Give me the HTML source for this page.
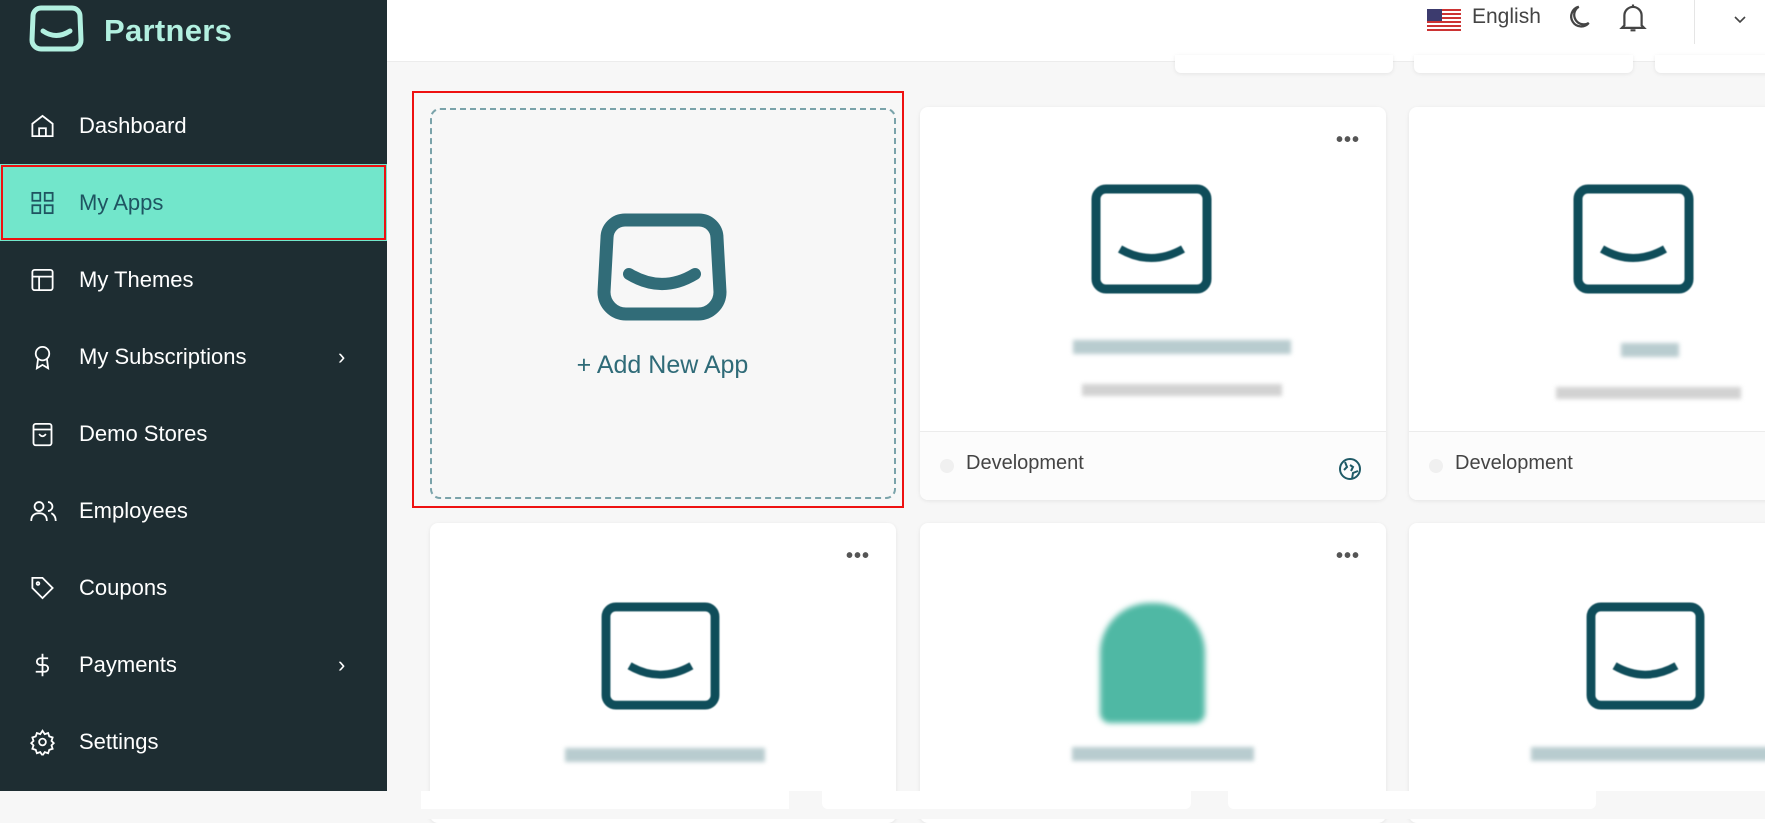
<!DOCTYPE html>
<html><head><meta charset="utf-8"><style>
*{margin:0;padding:0;box-sizing:border-box}
body{width:1765px;height:819px;overflow:hidden;background:#f7f7f7;font-family:"Liberation Sans",sans-serif;position:relative}
.sb{position:absolute;left:0;top:0;width:387px;height:791px;background:#1e2d32;z-index:2}
.logo{position:absolute;left:29px;top:5px}
.brand{position:absolute;left:104px;top:13px;font-size:31px;font-weight:bold;color:#b2f0e0;letter-spacing:.3px}
.item{position:absolute;left:0;width:387px;height:77px;color:#fff;font-size:22px}
.item span{position:absolute;left:79px;top:50%;transform:translateY(-50%)}
.item svg{position:absolute;left:29px;top:50%;transform:translateY(-50%)}
.item .chev{position:absolute;left:338px;font-size:22px}
.active{background:#72e6cb;color:#1f5461;outline:2px solid #e11;outline-offset:-3px}
.hdr{position:absolute;left:387px;top:0;right:0;height:62px;background:#fff;border-bottom:1px solid #ececec}
.card{position:absolute;background:#fff;border-radius:8px;box-shadow:0 1px 4px rgba(0,0,0,.08);overflow:hidden}
.foot{position:absolute;left:0;right:0;bottom:0;height:69px;border-top:1px solid #ececec;background:#fcfcfc}
.dev{position:absolute;left:46px;top:20px;font-size:20px;color:#444}
.dot{position:absolute;left:20px;top:27px;width:14px;height:14px;border-radius:50%;background:#f0f0f0}
.dots{position:absolute;right:26px;top:22px;font-size:20px;color:#555;letter-spacing:1px;font-weight:bold}
.blur{position:absolute;background:#b8cccf;filter:blur(2px);height:14px}
.blur2{position:absolute;background:#d2d2d2;filter:blur(2px);height:12px}
.ai{position:absolute;filter:blur(.6px)}
</style></head><body>
<div class="sb">
 <svg class="logo" width="55" height="48" viewBox="0 0 55 48"><path d="M12 3h31a8 8 0 0 1 8 8l1 24a9 9 0 0 1-9 9H12a9 9 0 0 1-9-9l1-24a8 8 0 0 1 8-8z" fill="none" stroke="#b2f0e0" stroke-width="5"/><path d="M14 26q13 9 27 0" fill="none" stroke="#b2f0e0" stroke-width="5" stroke-linecap="round"/></svg>
 <div class="brand">Partners</div>
 <div class="item" style="top:87px"><svg width="27" height="27" viewBox="0 0 24 24" fill="none" stroke="#fff" stroke-width="1.6"><path d="M3 10l9-7 9 7v11H3z"/><path d="M9 21v-7h6v7"/></svg><span>Dashboard</span></div>
 <div class="item active" style="top:164px"><svg width="27" height="27" viewBox="0 0 24 24" fill="none" stroke="#1f5461" stroke-width="1.6"><rect x="3" y="3" width="7" height="7"/><rect x="14" y="3" width="7" height="7"/><rect x="3" y="14" width="7" height="7"/><rect x="14" y="14" width="7" height="7"/></svg><span>My Apps</span></div>
 <div class="item" style="top:241px"><svg width="27" height="27" viewBox="0 0 24 24" fill="none" stroke="#fff" stroke-width="1.6"><rect x="3" y="3" width="18" height="18" rx="2"/><path d="M3 9h18M9 9v12"/></svg><span>My Themes</span></div>
 <div class="item" style="top:318px"><svg width="27" height="27" viewBox="0 0 24 24" fill="none" stroke="#fff" stroke-width="1.6"><circle cx="12" cy="9" r="6"/><path d="M8 14l-1 8 5-3 5 3-1-8"/></svg><span>My Subscriptions</span><span class="chev">›</span></div>
 <div class="item" style="top:395px"><svg width="27" height="27" viewBox="0 0 24 24" fill="none" stroke="#fff" stroke-width="1.6"><rect x="4" y="3" width="16" height="19" rx="2"/><path d="M4 8h16M9 12q3 4 6 0"/></svg><span>Demo Stores</span></div>
 <div class="item" style="top:472px"><svg width="29" height="27" viewBox="0 0 26 24" fill="none" stroke="#fff" stroke-width="1.6"><circle cx="9" cy="8" r="4"/><path d="M2 21q0-7 7-7t7 7M17 4a4 4 0 0 1 0 8M20 14q4 2 4 7"/></svg><span>Employees</span></div>
 <div class="item" style="top:549px"><svg width="27" height="27" viewBox="0 0 24 24" fill="none" stroke="#fff" stroke-width="1.6"><path d="M3 3h9l9 9-9 9-9-9z"/><circle cx="8" cy="8" r="1.2"/></svg><span>Coupons</span></div>
 <div class="item" style="top:626px"><svg width="27" height="27" viewBox="0 0 24 24" fill="none" stroke="#fff" stroke-width="1.6"><path d="M12 2v20M17 6H10a3 3 0 0 0 0 6h4a3 3 0 0 1 0 6H6"/></svg><span>Payments</span><span class="chev">›</span></div>
 <div class="item" style="top:703px"><svg width="27" height="27" viewBox="0 0 24 24" fill="none" stroke="#fff" stroke-width="1.6"><circle cx="12" cy="12" r="3"/><path d="M12 2l2 3 3-1 1 3 3 1-1 3 2 2-2 2 1 3-3 1-1 3-3-1-2 3-2-3-3 1-1-3-3-1 1-3-2-2 2-2-1-3 3-1 1-3 3 1z"/></svg><span>Settings</span></div>
</div>
<div class="hdr">
 <svg style="position:absolute;left:1040px;top:9px" width="34" height="22" viewBox="0 0 34 22"><rect width="34" height="22" fill="#fff"/><g fill="#c33"><rect y="0" width="34" height="2"/><rect y="4" width="34" height="2"/><rect y="8" width="34" height="2"/><rect y="12" width="34" height="2"/><rect y="16" width="34" height="2"/><rect y="20" width="34" height="2"/></g><rect width="15" height="12" fill="#3c3b6e"/></svg>
 <div style="position:absolute;left:1085px;top:5px;font-size:21px;color:#444">English</div>
 <svg style="position:absolute;left:1178px;top:3px" width="30" height="30" viewBox="0 0 24 24" fill="none" stroke="#444" stroke-width="1.8"><path d="M19 16A8 8 0 1 1 11 3a7 7 0 0 0 8 13z"/></svg>
 <svg style="position:absolute;left:1231px;top:2px" width="30" height="32" viewBox="0 0 24 26" fill="none" stroke="#444" stroke-width="1.8"><path d="M5 19V11a7 7 0 0 1 14 0v8l2 2H3zM10 23h4M12 2v2"/></svg>
 <div style="position:absolute;left:1307px;top:0;width:1px;height:44px;background:#e5e5e5"></div>
 <svg style="position:absolute;left:1346px;top:14px" width="14" height="10" viewBox="0 0 14 10" fill="none" stroke="#444" stroke-width="1.6"><path d="M2 3l5 5 5-5"/></svg>
</div>
<div class="card" style="left:1175px;top:55px;width:218px;height:18px;border-radius:0 0 6px 6px"></div>
<div class="card" style="left:1414px;top:55px;width:219px;height:18px;border-radius:0 0 6px 6px"></div>
<div class="card" style="left:1655px;top:55px;width:120px;height:18px;border-radius:0 0 6px 6px"></div>

<div style="position:absolute;left:412px;top:91px;width:492px;height:417px;border:2px solid #e11"></div>
<div style="position:absolute;left:430px;top:108px;width:466px;height:391px;border:2px dashed #7aa3aa;border-radius:10px;background:#f7f7f7"></div>
<svg style="position:absolute;left:597px;top:212px" width="130" height="110" viewBox="0 0 130 110"><path d="M28 8h74a18 18 0 0 1 18 18l3 54a22 22 0 0 1-22 22H29A22 22 0 0 1 7 80l3-54A18 18 0 0 1 28 8z" fill="none" stroke="#316c78" stroke-width="13"/><path d="M32 62q33 20 66 0" fill="none" stroke="#316c78" stroke-width="12" stroke-linecap="round"/></svg>
<div style="position:absolute;left:540px;top:351px;width:245px;text-align:center;font-size:25px;color:#2f6b78">+ Add New App</div>

<div class="card" style="left:920px;top:107px;width:466px;height:393px">
 <div class="dots">•••</div>
 <svg class="ai" style="left:168px;top:76px" width="127" height="112" viewBox="0 0 127 112"><rect x="8" y="6" width="111" height="100" rx="10" fill="none" stroke="#0f4d5a" stroke-width="9"/><path d="M32 66Q63 84 95 66" fill="none" stroke="#0f4d5a" stroke-width="8"/></svg>
 <div class="blur" style="left:153px;top:233px;width:218px"></div>
 <div class="blur2" style="left:162px;top:277px;width:200px"></div>
 <div class="foot"><div class="dot"></div><div class="dev">Development</div>
 <svg style="position:absolute;right:24px;top:25px" width="24" height="24" viewBox="0 0 24 24" fill="none" stroke="#1f5a66" stroke-width="2"><circle cx="12" cy="12" r="10"/><path d="M7 5l2 5-3 3M14 22l1-6 5-2M12 8l3 2-2 4"/></svg></div>
</div>
<div class="card" style="left:1409px;top:107px;width:400px;height:393px">
 <svg class="ai" style="left:161px;top:76px" width="127" height="112" viewBox="0 0 127 112"><rect x="8" y="6" width="111" height="100" rx="10" fill="none" stroke="#0f4d5a" stroke-width="9"/><path d="M32 66Q63 84 95 66" fill="none" stroke="#0f4d5a" stroke-width="8"/></svg>
 <div class="blur" style="left:212px;top:236px;width:58px"></div>
 <div class="blur2" style="left:147px;top:280px;width:185px"></div>
 <div class="foot"><div class="dot"></div><div class="dev">Development</div></div>
</div>
<div class="card" style="left:430px;top:523px;width:466px;height:300px">
 <div class="dots">•••</div>
 <svg class="ai" style="left:167px;top:78px" width="127" height="110" viewBox="0 0 127 112"><rect x="8" y="6" width="111" height="100" rx="10" fill="none" stroke="#0f4d5a" stroke-width="9"/><path d="M32 66Q63 84 95 66" fill="none" stroke="#0f4d5a" stroke-width="8"/></svg>
 <div class="blur" style="left:135px;top:225px;width:200px"></div>
</div>
<div class="card" style="left:920px;top:523px;width:466px;height:300px">
 <div class="dots">•••</div>
 <div style="position:absolute;left:180px;top:80px;width:105px;height:120px;border-radius:50px 50px 10px 10px;background:#4fb8a4;filter:blur(3px)"></div>
 <div class="blur" style="left:152px;top:224px;width:182px"></div>
</div>
<div class="card" style="left:1409px;top:523px;width:400px;height:300px">
 <svg class="ai" style="left:173px;top:78px" width="127" height="110" viewBox="0 0 127 112"><rect x="8" y="6" width="111" height="100" rx="10" fill="none" stroke="#0f4d5a" stroke-width="9"/><path d="M32 66Q63 84 95 66" fill="none" stroke="#0f4d5a" stroke-width="8"/></svg>
 <div class="blur" style="left:122px;top:224px;width:250px"></div>
</div>
<div style="position:absolute;left:0;top:791px;width:1765px;height:28px;background:#f7f7f7;z-index:3"></div>
<div style="position:absolute;left:421px;top:791px;width:368px;height:18px;background:#fff;z-index:3"></div>
<div style="position:absolute;left:822px;top:791px;width:369px;height:18px;background:#fff;border-radius:0 0 6px 6px;z-index:3"></div>
<div style="position:absolute;left:1228px;top:791px;width:368px;height:18px;background:#fff;border-radius:0 0 6px 6px;z-index:3"></div>
</body></html>
